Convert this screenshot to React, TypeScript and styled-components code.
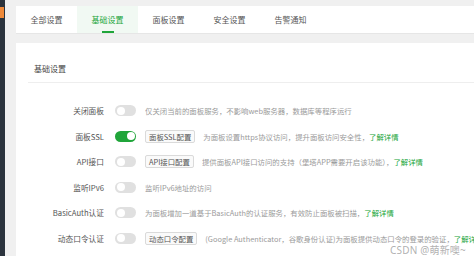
import React from "react";
import styled, { createGlobalStyle } from "styled-components";

const Global = createGlobalStyle`
  html, body { margin: 0; padding: 0; }
  body {
    width: 474px; height: 256px; overflow: hidden;
    background: #f0f0f0;
    font-family: "Noto Sans CJK SC", "Noto Sans", sans-serif;
  }
`;

const Page = styled.div`
  display: flex;
  width: 474px;
  height: 256px;
  position: relative;
  overflow: hidden;
`;

const Sidebar = styled.div`
  width: 5px;
  flex: none;
  background: #2b333d;
  padding-top: 7px;
  box-sizing: border-box;
`;

const SideMark = styled.div`
  width: 4px;
  height: 11px;
  background: #f08a3a;
`;

const Main = styled.div`
  flex: 1;
  padding: 6px 0 0 11px;
  display: flex;
  flex-direction: column;
  min-width: 0;
`;

const TabBar = styled.div`
  display: flex;
  height: 28px;
  background: #fff;
  border-bottom: 1px solid #e6e6e6;
  box-sizing: border-box;
`;

const Tab = styled.div<{ $active?: boolean }>`
  width: 61px;
  height: 100%;
  display: flex;
  align-items: center;
  justify-content: center;
  font-size: 8px;
  color: ${(p) => (p.$active ? "#20a53a" : "#555")};
  background: ${(p) => (p.$active ? "#f1f9f3" : "transparent")};
  position: relative;
  &::after {
    content: "";
    display: ${(p) => (p.$active ? "block" : "none")};
    position: absolute;
    left: 50%;
    bottom: 0;
    width: 12px;
    margin-left: -6px;
    height: 2px;
    background: #20a53a;
  }
`;

const Card = styled.div`
  margin-top: 9px;
  flex: 1;
  background: #fff;
  padding: 12px 0 0 12px;
`;

const CardHeader = styled.div`
  height: 28px;
  box-sizing: border-box;
  padding-left: 6px;
  font-size: 8px;
  color: #444;
  display: flex;
  align-items: center;
  border-bottom: 1px solid #eee;
`;

const Rows = styled.div`
  padding-top: 15px;
  margin-left: -12px;
`;

const Row = styled.div`
  display: flex;
  align-items: center;
  height: 25.5px;
  white-space: nowrap;
`;

const Label = styled.div`
  width: 88px;
  flex: none;
  text-align: right;
  font-size: 7.7px;
  color: #555;
  margin-right: 11px;
`;

const Switch = styled.div<{ $on?: boolean }>`
  width: 21px;
  height: 11px;
  border-radius: 6px;
  flex: none;
  background: ${(p) => (p.$on ? "#20a53a" : "#e0e0e0")};
  position: relative;
  margin-right: 9px;
  &::after {
    content: "";
    position: absolute;
    top: 1.5px;
    left: ${(p) => (p.$on ? "11.5px" : "1.5px")};
    width: 8px;
    height: 8px;
    border-radius: 50%;
    background: #fff;
  }
`;

const Btn = styled.div`
  height: 13px;
  flex: none;
  box-sizing: border-box;
  border: 1px solid #dadada;
  background: #fafafa;
  border-radius: 2px;
  padding: 0 3px;
  font-size: 7.4px;
  color: #555;
  display: flex;
  align-items: center;
  margin-right: 8px;
`;

const Desc = styled.div`
  font-size: 7.4px;
  color: #9a9a9a;
  overflow: hidden;
`;

const Link = styled.span`
  color: #20a53a;
`;

const Watermark = styled.div`
  position: absolute;
  right: 8px;
  bottom: -1px;
  font-family: "Noto Sans", "Noto Sans CJK SC", sans-serif;
  font-size: 10px;
  color: rgba(150, 150, 150, 0.75);
  letter-spacing: 0.2px;
`;

type RowData = {
  label: string;
  on?: boolean;
  btn?: string;
  desc: string;
  link?: boolean;
};

const rows: RowData[] = [
  { label: "关闭面板", desc: "仅关闭当前的面板服务，不影响web服务器，数据库等程序运行" },
  { label: "面板SSL", on: true, btn: "面板SSL配置", desc: "为面板设置https协议访问，提升面板访问安全性，", link: true },
  { label: "API接口", btn: "API接口配置", desc: "提供面板API接口访问的支持（堡塔APP需要开启该功能），", link: true },
  { label: "监听IPv6", desc: "监听IPv6地址的访问" },
  { label: "BasicAuth认证", desc: "为面板增加一道基于BasicAuth的认证服务，有效防止面板被扫描，", link: true },
  { label: "动态口令认证", btn: "动态口令配置", desc: "(Google Authenticator，谷歌身份认证)为面板提供动态口令的登录的验证，", link: true },
];

const tabs = ["全部设置", "基础设置", "面板设置", "安全设置", "告警通知"];

export default function App() {
  return (
    <Page>
      <Global />
      <Sidebar>
        <SideMark />
      </Sidebar>
      <Main>
        <TabBar>
          {tabs.map((t, i) => (
            <Tab key={t} $active={i === 1}>{t}</Tab>
          ))}
        </TabBar>
        <Card>
          <CardHeader>基础设置</CardHeader>
          <Rows>
            {rows.map((r) => (
              <Row key={r.label}>
                <Label>{r.label}</Label>
                <Switch $on={r.on} />
                {r.btn && <Btn>{r.btn}</Btn>}
                <Desc>
                  {r.desc}
                  {r.link && <Link>了解详情</Link>}
                </Desc>
              </Row>
            ))}
          </Rows>
        </Card>
      </Main>
      <Watermark>CSDN @萌新噢~</Watermark>
    </Page>
  );
}
